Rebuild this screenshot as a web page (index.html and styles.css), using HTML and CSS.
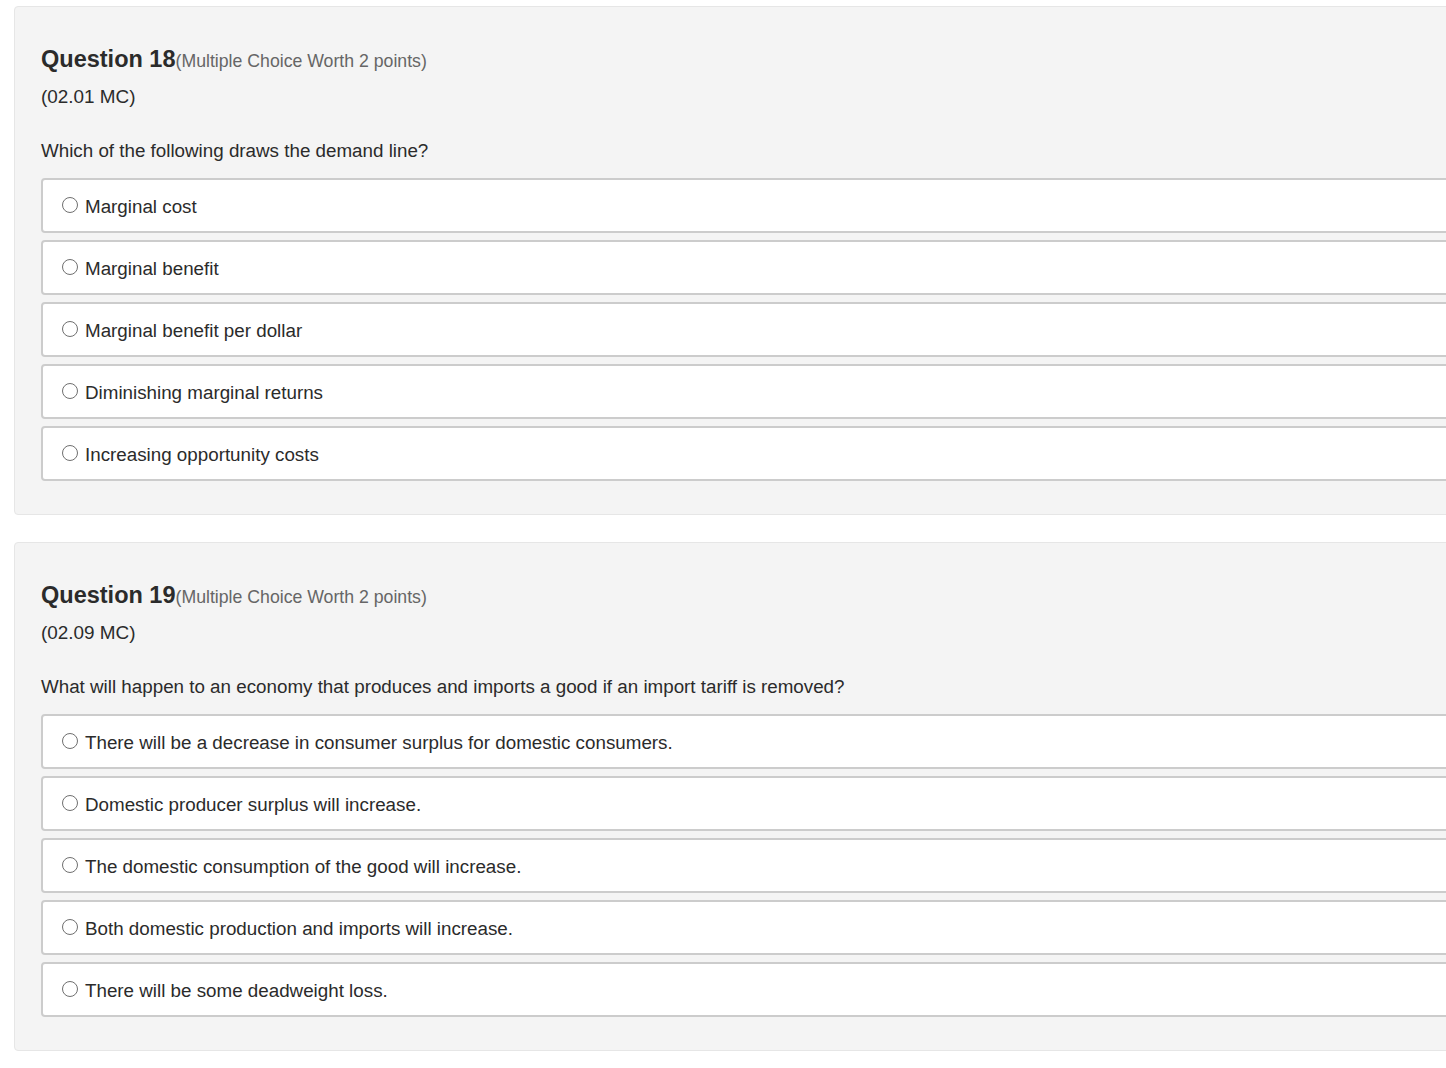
FILE: index.html
```html
<!DOCTYPE html>
<html lang="en">
<head>
<meta charset="utf-8">
<title>Questions</title>
<link rel="stylesheet" href="styles.css">
</head>
<body>
<main class="page">
  <section class="question">
    <h2 class="q-title">Question 18<span class="q-meta">(Multiple Choice Worth 2 points)</span></h2>
    <p class="q-code">(02.01 MC)</p>
    <p class="q-text">Which of the following draws the demand line?</p>
    <ul class="options">
      <li class="option"><span class="radio"></span><span>Marginal cost</span></li>
      <li class="option"><span class="radio"></span><span>Marginal benefit</span></li>
      <li class="option"><span class="radio"></span><span>Marginal benefit per dollar</span></li>
      <li class="option"><span class="radio"></span><span>Diminishing marginal returns</span></li>
      <li class="option"><span class="radio"></span><span>Increasing opportunity costs</span></li>
    </ul>
  </section>
  <section class="question">
    <h2 class="q-title">Question 19<span class="q-meta">(Multiple Choice Worth 2 points)</span></h2>
    <p class="q-code">(02.09 MC)</p>
    <p class="q-text">What will happen to an economy that produces and imports a good if an import tariff is removed?</p>
    <ul class="options">
      <li class="option"><span class="radio"></span><span>There will be a decrease in consumer surplus for domestic consumers.</span></li>
      <li class="option"><span class="radio"></span><span>Domestic producer surplus will increase.</span></li>
      <li class="option"><span class="radio"></span><span>The domestic consumption of the good will increase.</span></li>
      <li class="option"><span class="radio"></span><span>Both domestic production and imports will increase.</span></li>
      <li class="option"><span class="radio"></span><span>There will be some deadweight loss.</span></li>
    </ul>
  </section>
</main>
</body>
</html>
```
FILE: styles.css
```css
html, body {
  margin: 0;
  padding: 0;
  background: #ffffff;
  overflow: hidden;
}
body {
  font-family: "Liberation Sans", Arial, Helvetica, sans-serif;
  color: #2b2b2b;
}
.page {
  padding: 6px 0 0 14px;
  display: flex;
  flex-direction: column;
  gap: 27px;
  width: 1500px;
}
.question {
  background: #f4f4f4;
  border: 1px solid #e6e6e6;
  border-radius: 4px;
  padding: 38px 0 33px 26px;
}
.q-title {
  margin: 0;
  font-size: 23.5px;
  line-height: 28px;
  font-weight: bold;
  color: #2b2b2b;
}
.q-meta {
  font-size: 17.7px;
  line-height: 1;
  font-weight: normal;
  color: #666666;
}
.q-code {
  margin: 12px 0 0;
  font-size: 18.9px;
  line-height: 24px;
}
.q-text {
  margin: 30px 0 0;
  font-size: 18.8px;
  line-height: 24px;
}
.options {
  list-style: none;
  margin: 15px 0 0;
  padding: 0;
  display: flex;
  flex-direction: column;
  gap: 7px;
}
.option {
  display: flex;
  align-items: center;
  gap: 7px;
  background: #ffffff;
  border: 2px solid #cccccc;
  border-radius: 4px;
  padding: 15px 0 12px 19px;
  font-size: 18.8px;
  line-height: 24px;
  color: #2b2b2b;
}
.radio {
  flex: none;
  width: 14px;
  height: 14px;
  border: 1px solid #6f6f6f;
  border-radius: 50%;
  background: #ffffff;
  margin-top: -4px;
}
```
